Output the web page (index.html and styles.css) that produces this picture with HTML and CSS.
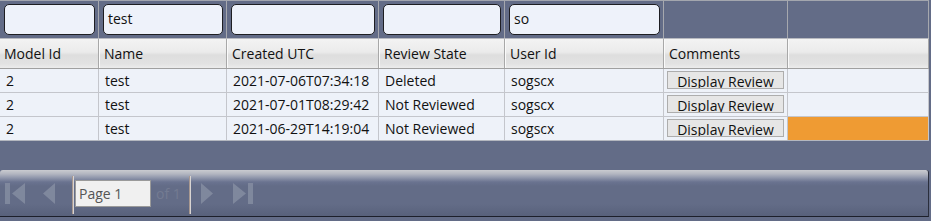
FILE: index.html
```html
<!DOCTYPE html>
<html>
<head>
<meta charset="utf-8">
<link rel="stylesheet" href="styles.css">
</head>
<body>
<div class="grid">
  <div class="row filters">
    <div class="cell"><div class="filter"></div></div>
    <div class="cell"><div class="filter">test</div></div>
    <div class="cell"><div class="filter"></div></div>
    <div class="cell"><div class="filter"></div></div>
    <div class="cell"><div class="filter">so</div></div>
    <div class="cell"></div>
    <div class="cell"></div>
  </div>
  <div class="row header">
    <div class="cell">Model Id</div>
    <div class="cell">Name</div>
    <div class="cell">Created UTC</div>
    <div class="cell">Review State</div>
    <div class="cell">User Id</div>
    <div class="cell">Comments</div>
    <div class="cell"></div>
  </div>
  <div class="row data">
    <div class="cell">2</div>
    <div class="cell">test</div>
    <div class="cell">2021-07-06T07:34:18</div>
    <div class="cell">Deleted</div>
    <div class="cell">sogscx</div>
    <div class="cell btncell"><span class="btn">Display Review</span></div>
    <div class="cell"></div>
  </div>
  <div class="row data">
    <div class="cell">2</div>
    <div class="cell">test</div>
    <div class="cell">2021-07-01T08:29:42</div>
    <div class="cell">Not Reviewed</div>
    <div class="cell">sogscx</div>
    <div class="cell btncell"><span class="btn">Display Review</span></div>
    <div class="cell"></div>
  </div>
  <div class="row data">
    <div class="cell">2</div>
    <div class="cell">test</div>
    <div class="cell">2021-06-29T14:19:04</div>
    <div class="cell">Not Reviewed</div>
    <div class="cell">sogscx</div>
    <div class="cell btncell"><span class="btn">Display Review</span></div>
    <div class="cell orange"></div>
  </div>
</div>
<div class="pager">
  <svg class="ico first" width="20" height="21" viewBox="0 0 20 21"><rect x="0" y="0" width="5" height="21" fill="#858da2"/><path d="M20 0 L7 10.5 L20 21 Z" fill="#858da2"/></svg>
  <svg class="ico prev" width="12" height="21" viewBox="0 0 12 21"><path d="M12 0 L0 10.5 L12 21 Z" fill="#858da2"/></svg>
  <span class="sep"></span>
  <span class="pageinput">Page 1</span>
  <span class="of">of 1</span>
  <span class="sep"></span>
  <svg class="ico next" width="12" height="21" viewBox="0 0 12 21"><path d="M0 0 L12 10.5 L0 21 Z" fill="#858da2"/></svg>
  <svg class="ico last" width="20" height="21" viewBox="0 0 20 21"><path d="M0 0 L13 10.5 L0 21 Z" fill="#858da2"/><rect x="15" y="0" width="5" height="21" fill="#858da2"/></svg>
</div>
</body>
</html>
```
FILE: styles.css
```css
html, body {
  margin: 0;
  padding: 0;
  background: #636c87;
  font-family: "Open Sans", "Noto Sans", sans-serif;
  font-size: 14px;
  color: #111;
}
.grid {
  width: 929px;
  border-top: 1px solid #a3a6ae;
  border-bottom: 1px solid #b4b7bf;
}
.row {
  display: grid;
  grid-template-columns: 99px 128px 152px 126px 159px 124px 141px;
}
.cell {
  border-right: 1px solid #a6a8ae;
  box-sizing: border-box;
  white-space: nowrap;
  overflow: hidden;
}
.filters {
  height: 37px;
  border-bottom: 1px solid #b8bac0;
}
.filters .cell {
  padding: 3px 3px 0 4px;
}
.filter {
  height: 31px;
  box-sizing: border-box;
  border: 1.5px solid #1e1e22;
  border-radius: 5px;
  background: #eef2fa;
  padding-left: 4px;
  line-height: 28px;
}
.header {
  height: 29px;
  border-bottom: 1px solid #a0a0a0;
  background: linear-gradient(#f3f3f3 0%, #ebebeb 45%, #dedede 55%, #e2e2e2 85%, #ececec 100%);
}
.header .cell {
  padding-left: 4px;
  line-height: 29px;
  border-right-color: #a8a8a8;
}
.header .cell + .cell {
  border-left: 1px solid #fafafa;
}
.data {
  height: 23px;
  background: #eef2f9;
  border-bottom: 1px solid #c4c6cc;
}
.data:last-child {
  border-bottom: none;
}
.data .cell {
  padding-left: 6px;
  line-height: 24px;
  border-right-color: #c4c6cc;
}
.data .btncell {
  padding: 2px 0 0 3px;
}
.btn {
  display: block;
  width: 117px;
  height: 18px;
  box-sizing: border-box;
  border: 1px solid #adadad;
  background: #e6e6e6;
  text-align: center;
  line-height: 17px;
  padding-top: 1px;
  overflow: hidden;
  color: #111;
}
.orange {
  background: #ef9b33;
}
.pager {
  margin-top: 29px;
  width: 929px;
  height: 47px;
  box-sizing: border-box;
  border-bottom: 1px solid #1c1f2a;
  border-right: 1px solid #2a2e3c;
  border-top-right-radius: 3px;
  border-top-left-radius: 3px;
  background: linear-gradient(#cacbd0 0px, #b2b5c0 4px, #8e95aa 8px, #6a7390 12px, #636c87 16px, #636c87 34px, #58617b 46px);
  display: flex;
  align-items: center;
  padding-left: 5px;
}
.ico {
  display: block;
  opacity: 0.85;
}
.first { margin-right: 18px; }
.prev { margin-right: 17px; }
.sep {
  width: 1px;
  height: 38px;
  background: #a89890;
  border-right: 1px solid #d8d4d2;
  align-self: flex-end;
  margin-bottom: 2px;
}
.pageinput {
  display: block;
  margin-left: 1px;
  width: 76px;
  height: 27px;
  box-sizing: border-box;
  border: 1px solid #9a9a9a;
  background: #f0f0f0;
  color: #555;
  line-height: 25px;
  padding-left: 3px;
}
.of {
  color: #737b92;
  margin-left: 5px;
  width: 33px;
}
.next { margin-left: 10px; margin-right: 20px; }
```
